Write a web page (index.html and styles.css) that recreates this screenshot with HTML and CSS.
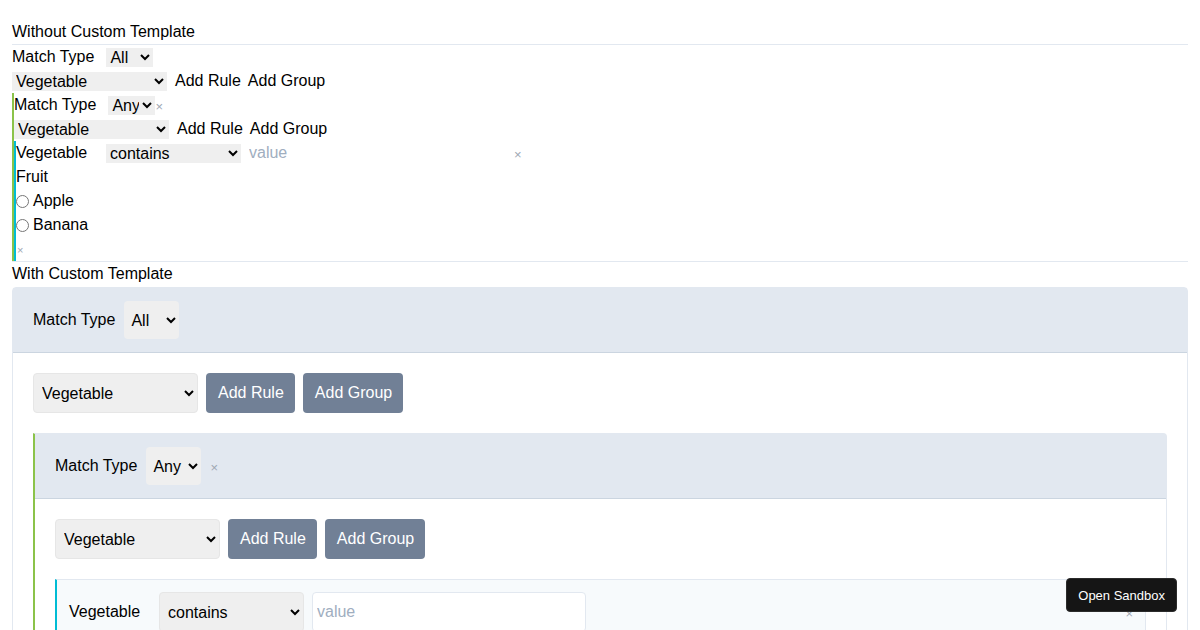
FILE: index.html
```html
<!DOCTYPE html>
<html lang="en">
<head>
<meta charset="utf-8">
<title>Query Builder</title>
<link rel="stylesheet" href="styles.css">
</head>
<body>
<div class="page">
  <div class="title title-first">Without Custom Template</div>
  <div class="plain">
    <div class="row">
      <span class="p-label">Match Type</span>
      <select class="p-select p-match"><option>All</option><option>Any</option></select>
    </div>
    <div class="row">
      <select class="p-select p-field"><option>Vegetable</option><option>Fruit</option></select>
      <button class="p-btn">Add Rule</button>
      <button class="p-btn">Add Group</button>
    </div>
    <div class="p-group">
      <div class="row">
        <span class="p-label">Match Type</span>
        <select class="p-select p-match"><option>Any</option><option>All</option></select>
        <button class="p-x">×</button>
      </div>
      <div class="row">
        <select class="p-select p-field"><option>Vegetable</option><option>Fruit</option></select>
        <button class="p-btn">Add Rule</button>
        <button class="p-btn">Add Group</button>
      </div>
      <div class="p-rule">
        <div class="row">
          <span class="p-fname">Vegetable</span>
          <select class="p-select p-op"><option>contains</option><option>equals</option></select>
          <input class="p-input" type="text" placeholder="value">
          <button class="p-x">×</button>
        </div>
      </div>
      <div class="p-rule">
        <div class="row">Fruit</div>
        <label class="row"><input class="p-radio" type="radio" name="fruit-plain">Apple</label>
        <label class="row"><input class="p-radio" type="radio" name="fruit-plain">Banana</label>
        <div class="row"><button class="p-x p-x-small">×</button></div>
      </div>
    </div>
  </div>

  <div class="title title-second">With Custom Template</div>
  <div class="qb-group">
    <div class="qb-header">
      <span class="qb-label">Match Type</span>
      <select class="qb-select qb-match"><option>All</option><option>Any</option></select>
    </div>
    <div class="qb-body">
      <div class="qb-actions">
        <select class="qb-select qb-field"><option>Vegetable</option><option>Fruit</option></select>
        <button class="qb-btn">Add Rule</button>
        <button class="qb-btn">Add Group</button>
      </div>
      <div class="qb-group qb-nested">
        <div class="qb-header">
          <span class="qb-label">Match Type</span>
          <select class="qb-select qb-match"><option>Any</option><option>All</option></select>
          <button class="qb-x qb-x-header">×</button>
        </div>
        <div class="qb-body">
          <div class="qb-actions">
            <select class="qb-select qb-field"><option>Vegetable</option><option>Fruit</option></select>
            <button class="qb-btn">Add Rule</button>
            <button class="qb-btn">Add Group</button>
          </div>
          <div class="qb-rule">
            <span class="qb-fname">Vegetable</span>
            <select class="qb-select qb-op"><option>contains</option><option>equals</option></select>
            <input class="qb-input" type="text" placeholder="value">
            <button class="qb-x qb-x-rule">×</button>
          </div>
          <div class="qb-rule">
            <span class="qb-fname">Fruit</span>
            <label class="qb-radio"><input type="radio" name="fruit-custom">Apple</label>
            <label class="qb-radio"><input type="radio" name="fruit-custom">Banana</label>
            <button class="qb-x qb-x-rule">×</button>
          </div>
        </div>
      </div>
    </div>
  </div>
</div>

<button class="sandbox">Open Sandbox</button>
</body>
</html>
```

FILE: styles.css
```css
html {
  scrollbar-width: none;
}

body {
  margin: 0;
  font-family: "Liberation Sans", Arial, sans-serif;
  font-size: 16px;
  color: #000;
  background: #fff;
}

.page {
  padding: 20px 12px 40px;
}

.title {
  line-height: 24px;
}

.title-first {
  border-bottom: 1px solid #e2e8f0;
}

.title-second {
  padding-bottom: 1px;
}

/* ---------- plain (no template) ---------- */

.plain {
  border-bottom: 1px solid #e2e8f0;
}

.row {
  display: flex;
  align-items: center;
  height: 24px;
}

.p-label {
  margin-right: 12px;
}

.p-select {
  font: inherit;
  color: #000;
  background: #efefef;
  border: none;
  border-radius: 0;
  margin: 0;
  padding: 0;
  height: 19px;
}

.p-match {
  width: 47px;
}

.p-field {
  width: 155px;
}

.p-op {
  width: 135px;
}

.p-btn {
  font: inherit;
  color: #000;
  background: none;
  border: none;
  padding: 0;
  margin: 0 0 0 8px;
  cursor: pointer;
}

.p-btn + .p-btn {
  margin-left: 7px;
}

.p-x {
  font-family: inherit;
  font-size: 13px;
  line-height: 1;
  color: #9ea7b3;
  background: none;
  border: none;
  padding: 0;
  margin: 2px 0 0;
  cursor: pointer;
}

.p-x-small {
  font-size: 11px;
  margin-left: 1px;
}

.p-group {
  border-left: 2px solid #8bc34a;
}

.p-rule {
  border-left: 2px solid #00bcd4;
}

.p-fname {
  width: 90px;
}

.p-input {
  font: inherit;
  width: 264px;
  height: 19px;
  margin: 0 1px 0 8px;
  padding: 0;
  border: none;
  background: transparent;
  outline: none;
}

.p-input::placeholder,
.qb-input::placeholder {
  color: #a0aec0;
}

.p-radio {
  margin: 0 4px 0 0;
}

/* ---------- custom template ---------- */

.qb-group {
  border: 1px solid #e2e8f0;
  border-radius: 4px;
  background: #fff;
}

.qb-nested {
  margin-top: 20px;
  border-left: 2px solid #8bc34a;
  border-radius: 0 4px 4px 0;
}

.qb-header {
  display: flex;
  align-items: center;
  padding: 13px 20px;
  background: #e2e8f0;
  border-bottom: 1px solid #cbd5e0;
}

.qb-label {
  margin-right: 9px;
}

.qb-select {
  font: inherit;
  color: #000;
  background: #efefef;
  border: 1px solid #e6e6e6;
  border-radius: 4px;
  margin: 0;
  padding: 0 4px;
  height: 40px;
}

.qb-match {
  width: 55px;
  height: 38px;
  border: none;
  padding: 0 3px;
}

.qb-field {
  width: 165px;
}

.qb-op {
  width: 145px;
}

.qb-body {
  padding: 20px;
}

.qb-actions {
  display: flex;
  align-items: center;
  gap: 8px;
}

.qb-btn {
  font: inherit;
  color: #fff;
  background: #718096;
  border: none;
  border-radius: 4px;
  height: 40px;
  padding: 0 11px 0 12px;
  cursor: pointer;
}

.qb-x {
  font-family: inherit;
  font-size: 13px;
  line-height: 1;
  color: #9ea7b3;
  background: none;
  border: none;
  padding: 0;
  cursor: pointer;
}

.qb-x-header {
  margin: 2px 0 0 9px;
}

.qb-x-rule {
  margin: 2px 0 0 auto;
}

.qb-rule {
  display: flex;
  align-items: center;
  margin-top: 20px;
  padding: 12px;
  background: #f7fafc;
  border: 1px solid #e2e8f0;
  border-left: 2px solid #00bcd4;
}

.qb-fname {
  width: 90px;
}

.qb-input {
  font: inherit;
  width: 274px;
  height: 40px;
  box-sizing: border-box;
  margin-left: 8px;
  padding: 0 4px;
  border: 1px solid #e2e8f0;
  border-radius: 4px;
  background: #fff;
  outline: none;
}

.qb-radio {
  display: flex;
  align-items: center;
  height: 40px;
  margin-right: 16px;
}

.qb-radio input {
  margin: 0 4px 0 0;
}

/* ---------- floating button ---------- */

.sandbox {
  position: fixed;
  right: 23px;
  bottom: 18px;
  height: 34px;
  padding: 0 11px;
  font-family: "Liberation Sans", Arial, sans-serif;
  font-size: 13px;
  color: #fff;
  background: #151515;
  border: 1px solid #2b2b2b;
  border-radius: 4px;
  cursor: pointer;
}
```
